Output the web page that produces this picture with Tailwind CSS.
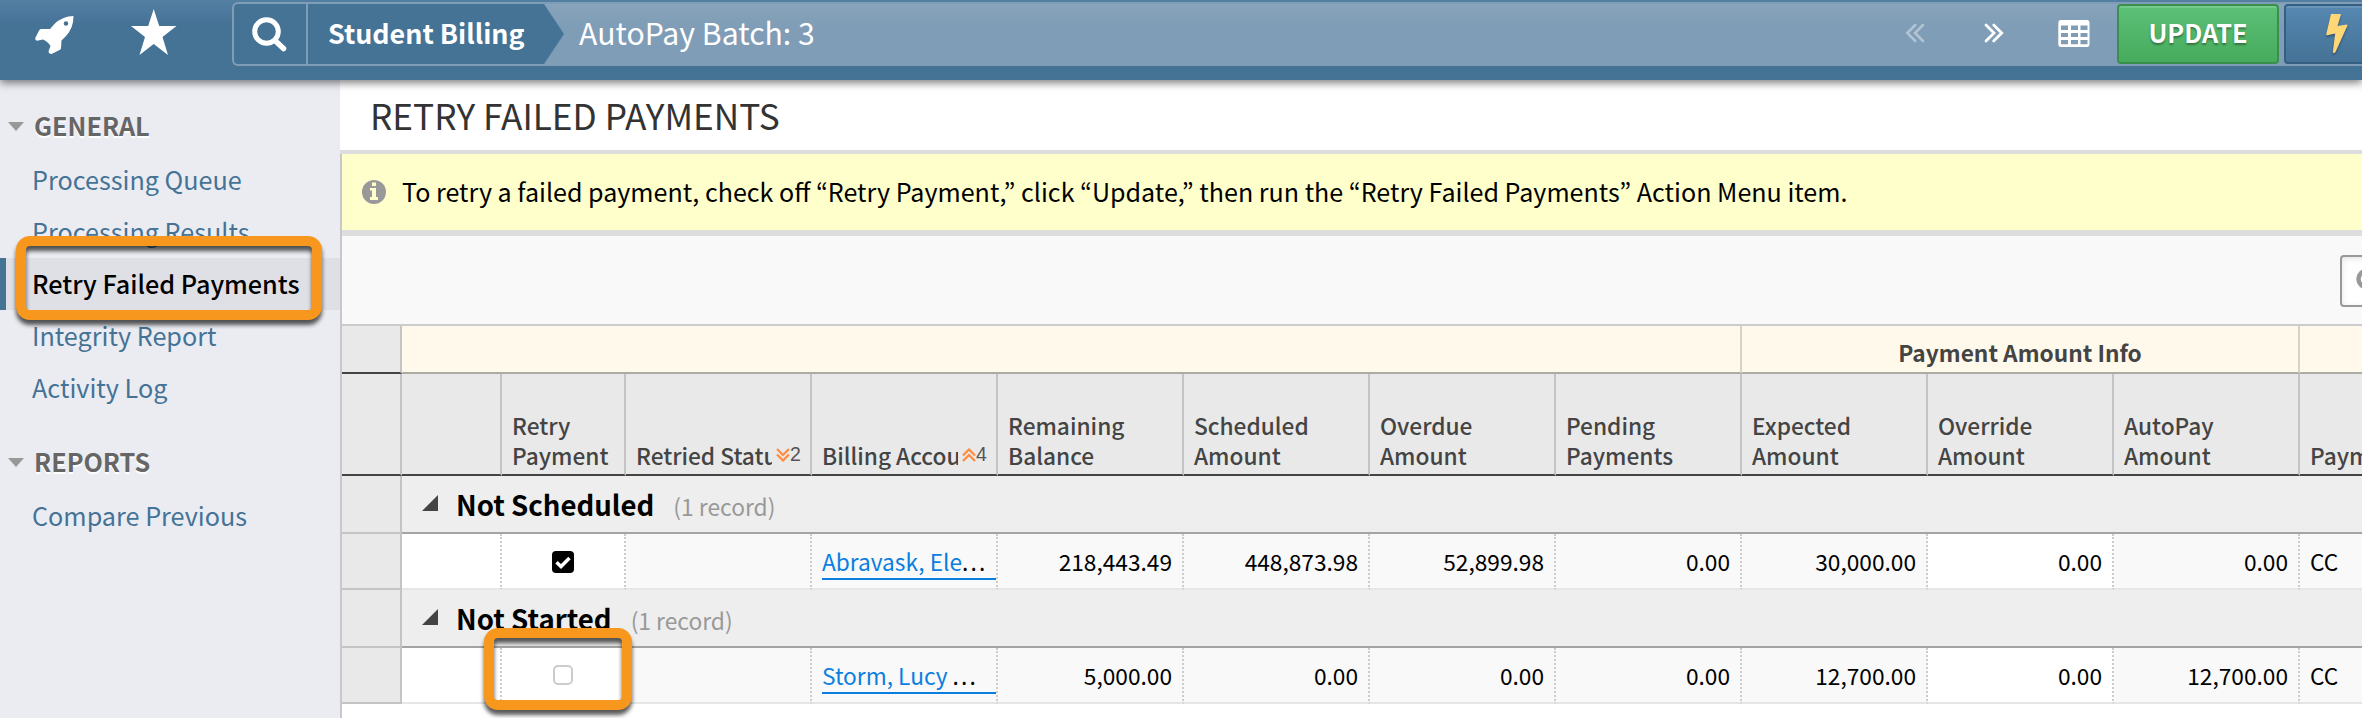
<!DOCTYPE html>
<html lang="en">
<head>
    <meta charset="UTF-8">
    <meta name="viewport" content="width=device-width, initial-scale=1.0">
    <title>AutoPay Batch: 3 - Student Billing</title>
    <script src="https://cdn.jsdelivr.net/npm/@tailwindcss/browser@4"></script>
</head>
<body class="relative flex flex-col w-[2362px] h-[718px] overflow-hidden bg-white text-black font-['Noto_Sans_CJK_KR',sans-serif]">

    <!-- Top bar -->
    <header class="relative z-10 flex items-start h-20 shrink-0 pt-0.5 bg-linear-to-b from-[#537fa3] to-[#457396] to-30% shadow-[0_3px_8px_rgba(0,0,0,0.5)]">
        <div class="flex w-[232px] h-16 shrink-0">
            <svg class="w-10 h-10 ml-[35px] mt-[13px]" viewBox="0 0 40 40" fill="#fff">
                <path fill-rule="evenodd" d="M38.500 1C32 1 24 4 19 9.500L15 14L6.500 14Q5 14 4.200 15.300L.500 22.500Q-.500 25 2 25.800L8 24.500Q13 26.500 15.500 31L13.600 36Q13.500 38.800 16.500 39L25 34.800Q26 34.200 26 33L26.500 25.500L31 21Q38.500 13 38.500 1ZM31 6.200A2.300 2.300 0 1 1 31 10.800A2.300 2.300 0 1 1 31 6.200Z"/>
            </svg>
            <svg class="w-[46px] h-[46px] ml-[56px] mt-[7px]" viewBox="0 0 46 46" fill="#fff">
                <path d="M22.700 0L28.200 17H45.500L31.500 28L37 46L22.700 35L8.500 46L14 28L0 17H17.200Z"/>
            </svg>
        </div>
        <div class="flex grow h-16 rounded-l-md border-2 border-r-0 border-[#7f9db6] bg-linear-to-b from-[#88a3bc] to-[#7f9db6] to-40% overflow-hidden">
            <div class="flex items-center justify-center w-[74px] shrink-0 bg-[#457396] border-r-2 border-[#7f9db6]">
                <svg class="w-9 h-9 mr-0.5" viewBox="0 0 36 36" fill="none" stroke="#fff">
                    <circle cx="15.500" cy="15.500" r="11.800" stroke-width="5"/>
                    <path d="M24.500 25L32.500 32.500" stroke-width="5.500" stroke-linecap="round"/>
                </svg>
            </div>
            <div class="flex items-center w-[256px] shrink-0 pl-5 pb-px bg-[#457396] text-white text-[26.85px] font-bold whitespace-nowrap [clip-path:polygon(0_0,236px_0,100%_50%,236px_100%,0_100%)]">Student Billing</div>
            <div class="flex items-center grow pl-[15px] pb-0.5 text-white text-[30.2px] whitespace-nowrap">AutoPay Batch: 3</div>
            <svg class="w-5 h-5 mt-[19px] opacity-40" viewBox="0 0 20 20" fill="none" stroke="#fff" stroke-width="2.500" stroke-linecap="round">
                <path d="M10.300 2L2.300 10L10.300 18M18 2L10 10L18 18"/>
            </svg>
            <svg class="w-5 h-5 mt-[19px] ml-[59px]" viewBox="0 0 20 20" fill="none" stroke="#fff" stroke-width="2.800" stroke-linecap="round">
                <path d="M2 2L10 10L2 18M9.700 2L17.700 10L9.700 18"/>
            </svg>
            <svg class="w-8 h-7 mt-4 ml-[54px]" viewBox="0 0 32 28">
                <path fill="#fff" fill-rule="evenodd" d="M3 0H29Q31.500 0 31.500 3V24Q31.500 27 29 27H3Q.300 27 .300 24V3Q.300 0 3 0ZM3 5.500V10H10V5.500ZM13 5.500V10H20V5.500ZM22.500 5.500V10H29.500V5.500ZM3 13V17H10V13ZM13 13V17H20V13ZM22.500 13V17H29.500V13ZM3 20V24.300H10V20ZM13 20V24.300H20V20ZM22.500 20V24.300H29.500V20Z"/>
            </svg>
            <button class="flex items-center justify-center w-[162px] h-[60px] shrink-0 ml-[27px] pb-[3px] rounded-[4px] border-2 border-[#3a8f4c] bg-linear-to-b from-[#5cc178] to-[#46ab5c] shadow-[inset_0_2px_0_rgba(255,255,255,0.15)] text-white text-[25.3px] font-bold [text-shadow:0_2px_2px_rgba(0,0,0,0.35)]">UPDATE</button>
            <button class="w-[100px] h-[60px] shrink-0 ml-[5px] mr-[-22px] pl-10 rounded-[4px] border-2 border-[#355f80] bg-linear-to-b from-[#5688b2] to-[#457296] shadow-[inset_0_2px_0_rgba(255,255,255,0.12)]">
                <svg class="w-[22px] h-10 drop-shadow-[0_2px_1px_rgba(0,0,0,0.3)]" viewBox="0 0 22 40" fill="#ffd777">
                    <path d="M5 0H15L11.500 12L21 10.500Q21.500 11 21 12.500L9.500 38Q8.500 39.500 6.800 38.500L9.200 19.500L1 21.300Q0 21 .300 20Z"/>
                </svg>
            </button>
        </div>
    </header>

    <div class="flex grow min-h-0">
        <!-- Sidebar -->
        <nav class="flex flex-col w-[340px] shrink-0 pt-4 bg-[#ebecf2] text-[25.2px] text-[#457396] whitespace-nowrap">
            <div class="flex items-center h-[58px] pt-0.5 pl-2 gap-2.5 text-[#666] font-bold [text-shadow:0_2px_0_#fff]">
                <svg class="w-4 h-[9px]" viewBox="0 0 16 9" fill="#999"><path d="M0 0H16L8 9Z"/></svg>
                <span>GENERAL</span>
            </div>
            <a class="flex items-center h-[52px] pl-8">Processing Queue</a>
            <a class="flex items-center h-[52px] pl-8">Processing Results</a>
            <a class="flex items-center h-[52px] pl-[26px] border-l-6 border-[#457396] bg-[#dfe0e6] text-black font-medium">Retry Failed Payments</a>
            <a class="flex items-center h-[52px] pl-8">Integrity Report</a>
            <a class="flex items-center h-[52px] pl-8">Activity Log</a>
            <div class="flex items-center h-[58px] mt-[18px] pt-0.5 pl-2 gap-2.5 text-[#666] font-bold [text-shadow:0_2px_0_#fff]">
                <svg class="w-4 h-[9px]" viewBox="0 0 16 9" fill="#999"><path d="M0 0H16L8 9Z"/></svg>
                <span>REPORTS</span>
            </div>
            <a class="flex items-center h-[52px] pl-8">Compare Previous</a>
        </nav>

        <main class="flex flex-col grow min-w-0 overflow-hidden">
            <h1 class="flex items-center h-[70px] shrink-0 pl-[30px] text-[35.2px] text-[#333] whitespace-nowrap">RETRY FAILED PAYMENTS</h1>
            <div class="h-1 shrink-0 bg-[#ddd]"></div>

            <div class="flex flex-col grow border-l-2 border-[#c8c8c8]">
                <!-- Info message -->
                <div class="flex items-center h-[76px] shrink-0 pl-5 gap-4 bg-[#ffffcc] text-[25.07px] whitespace-nowrap">
                    <svg class="w-6 h-6" viewBox="0 0 24 24">
                        <circle cx="12" cy="12" r="12" fill="#999"/>
                        <path fill="#ffffcc" d="M10 2.500H14V6H10ZM8 8H14V17H16V20H8V17H10V10.500H8Z"/>
                    </svg>
                    <p>To retry a failed payment, check off “Retry Payment,” click “Update,” then run the “Retry Failed Payments” Action Menu item.</p>
                </div>
                <div class="h-1.5 shrink-0 bg-[#ddd]"></div>

                <!-- Toolbar -->
                <div class="flex items-start justify-end h-[90px] shrink-0 pt-[19px] bg-[#f9f9f9] border-b-2 border-[#ccc]">
                    <div class="flex items-center w-[200px] h-[52px] -mr-[178px] pl-3.5 rounded-[4px] border-2 border-[#999] bg-white shadow-[inset_0_2px_6px_rgba(0,0,0,0.1)]">
                        <svg class="w-7 h-7" viewBox="0 0 28 28" fill="none" stroke="#999" stroke-width="4.500">
                            <circle cx="10.500" cy="12" r="8"/>
                            <path d="M17 19L24 26"/>
                        </svg>
                    </div>
                </div>

                <!-- Column groups -->
                <div class="grid grid-cols-[60px_1340px_558px_186px] h-12 shrink-0 text-[22.7px] font-bold text-[#444]">
                    <div class="bg-[#e9e9e9] border-r-2 border-b-2 border-r-[#c4c4c4] border-b-[#444]"></div>
                    <div class="bg-[#fff9ec] border-r-2 border-b-2 border-r-[#d5d2c6] border-b-[#adaca4]"></div>
                    <div class="flex items-center justify-center pt-[9px] bg-[#fff9ec] border-r-2 border-b-2 border-r-[#d5d2c6] border-b-[#adaca4]">Payment Amount Info</div>
                    <div class="bg-[#fff9ec] border-b-2 border-b-[#adaca4]"></div>
                </div>

                <!-- Column headers -->
                <div class="grid grid-cols-[60px_100px_124px_repeat(9,186px)_186px] h-[102px] shrink-0 bg-[#e9e9e9] text-[22.7px] leading-[30px] font-medium text-[#444] whitespace-nowrap *:flex *:items-end *:pl-2.5 *:pb-[3px] *:border-r-2 *:border-b-2 *:border-r-[#c4c4c4] *:border-b-[#444]">
                    <div></div>
                    <div></div>
                    <div>Retry<br>Payment</div>
                    <div>
                        <span class="w-[136px] overflow-hidden">Retried Status</span>
                        <svg class="w-3.5 h-3.5 ml-[4px] mb-[9px] shrink-0" viewBox="0 0 14 14" fill="none" stroke="#ff8b3d" stroke-width="2.200"><path d="M1 1L7 7L13 1M1 6.500L7 12.500L13 6.500"/></svg>
                        <span class="mb-0.5 font-['Liberation_Sans',sans-serif] font-normal text-[19.5px] text-[#555]">2</span>
                    </div>
                    <div>
                        <span class="w-[136px] overflow-hidden">Billing Account</span>
                        <svg class="w-3.5 h-3.5 ml-[4px] mb-[9px] shrink-0" viewBox="0 0 14 14" fill="none" stroke="#ff8b3d" stroke-width="2.200"><path d="M1 7.500L7 1.500L13 7.500M1 13L7 7L13 13"/></svg>
                        <span class="mb-0.5 font-['Liberation_Sans',sans-serif] font-normal text-[19.5px] text-[#555]">4</span>
                    </div>
                    <div>Remaining<br>Balance</div>
                    <div>Scheduled<br>Amount</div>
                    <div>Overdue<br>Amount</div>
                    <div>Pending<br>Payments</div>
                    <div>Expected<br>Amount</div>
                    <div>Override<br>Amount</div>
                    <div>AutoPay<br>Amount</div>
                    <div>Payment Type</div>
                </div>

                <!-- Not Scheduled -->
                <div class="grid grid-cols-[60px_1fr] h-[58px] shrink-0">
                    <div class="bg-[#e9e9e9] border-r-2 border-b-2 border-[#c4c4c4]"></div>
                    <div class="flex items-baseline pt-2 pl-5 bg-[#eee] border-b-2 border-[#a4a4a4] whitespace-nowrap">
                        <svg class="w-4 h-4 mr-[18px] -translate-y-[5px]" viewBox="0 0 16 16" fill="#444"><path d="M16 0V16H0Z"/></svg>
                        <span class="text-[27.6px] leading-[40px] font-bold">Not Scheduled</span>
                        <span class="ml-[19px] text-[22.8px] leading-[30px] text-[#999]">(1 record)</span>
                    </div>
                </div>
                <div class="grid grid-cols-[60px_100px_124px_repeat(9,186px)_186px] h-14 shrink-0 text-[22.7px] whitespace-nowrap *:flex *:items-center *:justify-end *:pt-0.5 *:pr-2.5 *:bg-[#f9f9f9] *:border-r-2 *:border-b-2 *:border-r-[#ccc] *:border-b-[#e6e6e6] *:[border-right-style:dotted]">
                    <div class="bg-[#e9e9e9]! border-[#c4c4c4]! border-solid!"></div>
                    <div class="bg-white!"></div>
                    <div class="bg-white! justify-center! pr-0!">
                        <svg class="w-[22px] h-[22px]" viewBox="0 0 22 22">
                            <rect width="22" height="22" rx="4"/>
                            <path d="M4.500 11.300L9 15.500L17.500 7" fill="none" stroke="#fff" stroke-width="3.500"/>
                        </svg>
                    </div>
                    <div></div>
                    <div class="pt-0! pl-2.5 pr-0!">
                        <a class="flex w-full h-[38px] items-center pt-1 border-b-2 border-[#0a7fe0] text-[#0a7fe0]">Abravask, Ele<span class="text-black tracking-[2.2px]">...</span></a>
                    </div>
                    <div>218,443.49</div>
                    <div>448,873.98</div>
                    <div>52,899.98</div>
                    <div>0.00</div>
                    <div>30,000.00</div>
                    <div class="bg-white!">0.00</div>
                    <div>0.00</div>
                    <div class="justify-start! pl-2.5">CC</div>
                </div>

                <!-- Not Started -->
                <div class="grid grid-cols-[60px_1fr] h-[58px] shrink-0">
                    <div class="bg-[#e9e9e9] border-r-2 border-b-2 border-[#c4c4c4]"></div>
                    <div class="flex items-baseline pt-2 pl-5 bg-[#eee] border-b-2 border-[#a4a4a4] whitespace-nowrap">
                        <svg class="w-4 h-4 mr-[18px] -translate-y-[5px]" viewBox="0 0 16 16" fill="#444"><path d="M16 0V16H0Z"/></svg>
                        <span class="text-[27.6px] leading-[40px] font-bold">Not Started</span>
                        <span class="ml-[19px] text-[22.8px] leading-[30px] text-[#999]">(1 record)</span>
                    </div>
                </div>
                <div class="grid grid-cols-[60px_100px_124px_repeat(9,186px)_186px] h-14 shrink-0 text-[22.7px] whitespace-nowrap *:flex *:items-center *:justify-end *:pt-0.5 *:pr-2.5 *:bg-[#f9f9f9] *:border-r-2 *:border-b-2 *:border-r-[#ccc] *:border-b-[#e6e6e6] *:[border-right-style:dotted]">
                    <div class="bg-[#e9e9e9]! border-[#c4c4c4]! border-solid!"></div>
                    <div class="bg-white!"></div>
                    <div class="bg-white! justify-center! pt-0! pr-0!">
                        <span class="w-5 h-5 rounded-[5px] border-2 border-[#ccc] bg-white"></span>
                    </div>
                    <div></div>
                    <div class="pt-0! pl-2.5 pr-0!">
                        <a class="flex w-full h-[38px] items-center pt-1 border-b-2 border-[#0a7fe0] text-[#0a7fe0] whitespace-pre">Storm, Lucy <span class="text-black tracking-[2.2px]">...</span></a>
                    </div>
                    <div>5,000.00</div>
                    <div>0.00</div>
                    <div>0.00</div>
                    <div>0.00</div>
                    <div>12,700.00</div>
                    <div class="bg-white!">0.00</div>
                    <div>12,700.00</div>
                    <div class="justify-start! pl-2.5">CC</div>
                </div>
            </div>
        </main>
    </div>

    <!-- Callouts -->
    <div class="absolute z-20 left-4 top-[236px] w-[306px] h-[84px] rounded-[14px] border-10 border-[#f8971d] drop-shadow-[0_5px_2px_rgba(0,0,0,0.65)]"></div>
    <div class="absolute z-20 left-[484px] top-[628px] w-[148px] h-[82px] rounded-[14px] border-10 border-[#f8971d] drop-shadow-[0_5px_2px_rgba(0,0,0,0.65)]"></div>
</body>
</html>
